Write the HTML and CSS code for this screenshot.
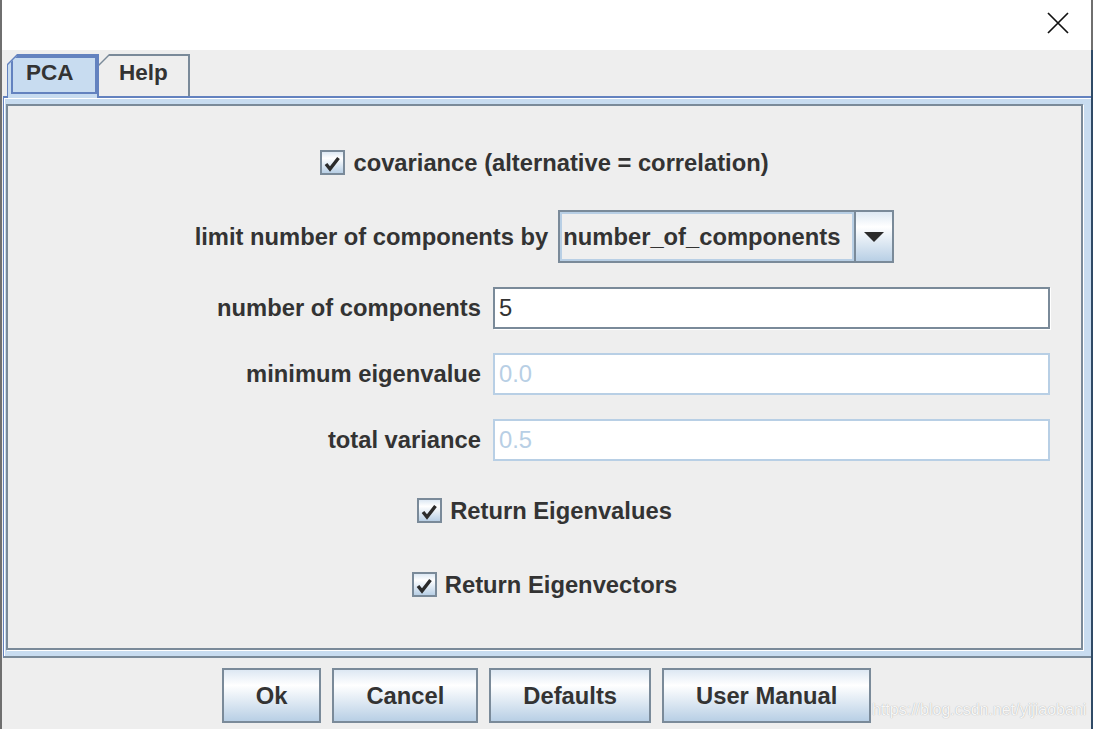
FILE: index.html
```html
<!DOCTYPE html>
<html lang="en">
<head>
    <meta charset="UTF-8">
    <meta name="viewport" content="width=device-width, initial-scale=1.0">
    <title>PCA</title>
    <link rel="stylesheet" href="styles.css">
</head>
<body>
    <div class="dialog">
        <div class="title-bar">
            <svg class="close-icon" width="22" height="22" viewBox="0 0 22 22">
                <path d="M1 1L21 21M21 1L1 21" stroke="#111" stroke-width="1.7" fill="none"/>
            </svg>
        </div>
        <div class="main">
            <div class="tabs">
                <div class="tab tab-selected">
                    <div class="tab-fill"><span class="tab-focus">PCA</span></div>
                </div>
                <div class="tab">
                    <div class="tab-fill">Help</div>
                </div>
            </div>

            <div class="panel">
                <div class="panel-inner">
                    <div class="check-row row-covariance">
                        <span class="check-box">
                            <svg width="21" height="21" viewBox="0 0 21 21"><path d="M4 12L8 17L16.5 6" stroke="#2b2b2b" stroke-width="3.4" fill="none"/></svg>
                        </span>
                        covariance (alternative = correlation)
                    </div>

                    <div class="combo-row">
                        <span>limit number of components by</span>
                        <div class="combo">
                            <div class="combo-value">number_of_components</div>
                            <div class="combo-arrow">
                                <svg width="20" height="10" viewBox="0 0 20 10"><path d="M0 0H20L10 10Z" fill="#2b2b2b"/></svg>
                            </div>
                        </div>
                    </div>

                    <div class="form-grid">
                        <span class="form-label">number of components</span>
                        <div class="text-field">5</div>
                        <span class="form-label">minimum eigenvalue</span>
                        <div class="text-field disabled">0.0</div>
                        <span class="form-label">total variance</span>
                        <div class="text-field disabled">0.5</div>
                    </div>

                    <div class="check-row row-eigenvalues">
                        <span class="check-box">
                            <svg width="21" height="21" viewBox="0 0 21 21"><path d="M4 12L8 17L16.5 6" stroke="#2b2b2b" stroke-width="3.4" fill="none"/></svg>
                        </span>
                        Return Eigenvalues
                    </div>

                    <div class="check-row row-eigenvectors">
                        <span class="check-box">
                            <svg width="21" height="21" viewBox="0 0 21 21"><path d="M4 12L8 17L16.5 6" stroke="#2b2b2b" stroke-width="3.4" fill="none"/></svg>
                        </span>
                        Return Eigenvectors
                    </div>
                </div>
            </div>

            <div class="button-row">
                <button class="btn">Ok</button>
                <button class="btn">Cancel</button>
                <button class="btn">Defaults</button>
                <button class="btn">User Manual</button>
            </div>
        </div>
        <span class="watermark">https://blog.csdn.net/yijiaobani</span>
    </div>
</body>
</html>
```

FILE: styles.css
```css
* {
    box-sizing: border-box;
}
body {
    margin: 0;
    width: 1093px;
    height: 729px;
    overflow: hidden;
    background: #eeeeee;
    font-family: "Liberation Sans", Arial, sans-serif;
    font-size: 23.75px;
    font-weight: bold;
    color: #333333;
}
.dialog {
    position: relative;
    height: 729px;
    border-left: 2px solid #6f6f6f;
}
.title-bar {
    height: 50px;
    background: #ffffff;
    border-right: 2px solid #6f6f6f;
    display: flex;
    justify-content: flex-end;
    padding: 12px 22px 0 0;
}
.main {
    border-right: 2px solid #2f4a66;
    height: 679px;
}

/* tabs */
.tabs {
    height: 46px;
    display: flex;
    align-items: flex-end;
    padding-left: 5px;
}
.tab {
    height: 42px;
    width: 91px;
    background: #7a8a99;
    padding: 2px 2px 0 0;
    clip-path: polygon(10px 0, 100% 0, 100% 100%, 0 100%, 0 10px);
}
.tab .tab-fill {
    height: 100%;
    background: #eeeeee;
    display: flex;
    align-items: center;
    justify-content: center;
    padding-bottom: 7px;
    font-size: 22.5px;
    clip-path: polygon(10px 0, 100% 0, 100% 100%, 0 100%, 0 10px);
}
.tab-selected {
    position: relative;
    z-index: 1;
    width: 92px;
    height: 44px;
    margin-bottom: -2px;
    background: #6382bf;
    padding: 2px 2px 0 1px;
}
.tab-selected .tab-fill {
    background: #c8dcf0;
    padding: 0 0 4px 3px;
    justify-content: flex-start;
    align-items: stretch;
    clip-path: polygon(9px 0, 100% 0, 100% 100%, 0 100%, 0 9px);
}
.tab-focus {
    flex: 1;
    border: 2px solid #6382bf;
    display: flex;
    align-items: center;
    padding: 0 0 4px 13px;
}

/* content panel */
.panel {
    margin-left: 1px;
    border-top: 2px solid #6382bf;
    border-left: 1px solid #6382bf;
    border-bottom: 2px solid #7a8a99;
    background: #c8dcf0;
    padding: 6px 8px 6px 2px;
    box-shadow: inset 1px 1px 0 #ffffff;
}
.panel-inner {
    height: 546px;
    border: 2px solid #7a8a99;
    background: #eeeeee;
    box-shadow: 1px 1px 0 #ffffff;
    display: flex;
    flex-direction: column;
    align-items: center;
}

.check-row {
    display: flex;
    align-items: center;
    gap: 8px;
    height: 25px;
    white-space: nowrap;
}
.check-box {
    width: 25px;
    height: 25px;
    border: 2px solid #7a8a99;
    background: linear-gradient(#dde8f3, #ffffff 30%, #b8cfe5);
    display: flex;
}
.row-covariance {
    margin-top: 44px;
}
.row-eigenvalues {
    margin-top: 37px;
}
.row-eigenvectors {
    margin-top: 49px;
}

.combo-row {
    display: flex;
    align-items: center;
    gap: 10px;
    margin-top: 35px;
    white-space: nowrap;
}
.combo {
    display: flex;
    width: 336px;
    height: 53px;
    border: 2px solid #7a8a99;
}
.combo-value {
    width: 294px;
    border: 2px solid #b8cfe5;
    background: #efefef;
    padding-left: 1px;
    display: flex;
    align-items: center;
}
.combo-arrow {
    flex: 1;
    border-left: 2px solid #7a8a99;
    background: linear-gradient(#dde8f3, #ffffff 30%, #b8cfe5);
    display: flex;
    align-items: center;
    justify-content: center;
}

.form-grid {
    align-self: flex-start;
    margin: 24px 0 0 203px;
    display: grid;
    grid-template-columns: 270px 557px;
    column-gap: 12px;
    row-gap: 24px;
}
.form-label {
    justify-self: end;
    align-self: center;
    white-space: nowrap;
}
.text-field {
    height: 42px;
    border: 2px solid #7a8a99;
    background: #ffffff;
    box-shadow: 1px 1px 0 #ffffff;
    padding-left: 4px;
    display: flex;
    align-items: center;
    font-weight: normal;
}
.text-field.disabled {
    border-color: #b8cfe5;
    color: #b8cfe5;
    box-shadow: none;
}

/* bottom buttons */
.button-row {
    display: flex;
    justify-content: center;
    gap: 11px;
    padding-top: 10px;
}
.btn {
    height: 55px;
    padding: 0 32px;
    border: 2px solid #7a8a99;
    background: linear-gradient(#dde8f3, #ffffff 30%, #b8cfe5);
    font-family: inherit;
    font-size: 23.75px;
    font-weight: bold;
    color: #333333;
    cursor: pointer;
}

.watermark {
    position: absolute;
    left: 870px;
    top: 701px;
    font-size: 16px;
    line-height: 18px;
    font-weight: normal;
    color: rgba(255, 255, 255, 0.92);
    text-shadow: 0 0 1px rgba(0, 0, 0, 0.35);
    white-space: nowrap;
}
```
